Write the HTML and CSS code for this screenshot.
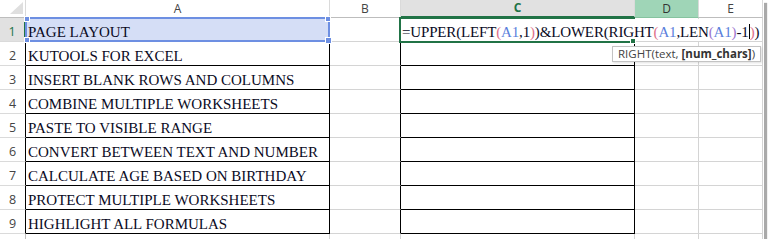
FILE: index.html
```html
<!DOCTYPE html>
<html>
<head>
<meta charset="utf-8">
<link rel="stylesheet" href="styles.css">
</head>
<body>
<div class="sheet">
  <div class="c ch corner"><svg width="25" height="17" viewBox="0 0 25 17"><polygon points="23,2 23,14 10,14" fill="#dfdfdf"/></svg></div>
  <div class="c ch">A</div>
  <div class="c ch">B</div>
  <div class="c ch chsel">C</div>
  <div class="c ch chhi">D</div>
  <div class="c ch">E</div>
  <div class="pad"></div>

  <div class="c rh rhsel">1</div>
  <div class="c bx ref"><span class="refbox"><i class="h tl"></i><i class="h tr"></i><i class="h bl2"></i><i class="h br"></i></span><span class="txt">PAGE LAYOUT</span></div>
  <div class="c bl"></div>
  <div class="c bx act">
    <span class="edit">=UPPER(LEFT<span class="p1">(</span><span class="r">A1</span>,1<span class="p1">)</span>)&amp;LOWER(RIGHT<span class="p1">(</span><span class="r">A1</span>,LEN<span class="p2">(</span><span class="r">A1</span><span class="p2">)</span>-1<span class="caret"></span><span class="p1">)</span>)</span>
    <span class="frame"></span>
    <span class="fill"></span>
  </div>
  <div class="c"></div>
  <div class="c"></div>
  <div class="pad"></div>

  <div class="c rh bl">2</div><div class="c bx">KUTOOLS FOR EXCEL</div><div class="c bl"></div><div class="c bx"></div><div class="c"></div><div class="c"></div><div class="pad"></div>
  <div class="c rh bl">3</div><div class="c bx">INSERT BLANK ROWS AND COLUMNS</div><div class="c bl"></div><div class="c bx"></div><div class="c"></div><div class="c"></div><div class="pad"></div>
  <div class="c rh bl">4</div><div class="c bx">COMBINE MULTIPLE WORKSHEETS</div><div class="c bl"></div><div class="c bx"></div><div class="c"></div><div class="c"></div><div class="pad"></div>
  <div class="c rh bl">5</div><div class="c bx">PASTE TO VISIBLE RANGE</div><div class="c bl"></div><div class="c bx"></div><div class="c"></div><div class="c"></div><div class="pad"></div>
  <div class="c rh bl">6</div><div class="c bx">CONVERT BETWEEN TEXT AND NUMBER</div><div class="c bl"></div><div class="c bx"></div><div class="c"></div><div class="c"></div><div class="pad"></div>
  <div class="c rh bl">7</div><div class="c bx">CALCULATE AGE BASED ON BIRTHDAY</div><div class="c bl"></div><div class="c bx"></div><div class="c"></div><div class="c"></div><div class="pad"></div>
  <div class="c rh bl">8</div><div class="c bx">PROTECT MULTIPLE WORKSHEETS</div><div class="c bl"></div><div class="c bx"></div><div class="c"></div><div class="c"></div><div class="pad"></div>
  <div class="c rh bl">9</div><div class="c bx">HIGHLIGHT ALL FORMULAS</div><div class="c bl"></div><div class="c bx"></div><div class="c"></div><div class="c"></div><div class="pad"></div>
  <div class="c rh"></div><div class="c"></div><div class="c"></div><div class="c"></div><div class="c"></div><div class="c"></div><div class="pad"></div>

  <div class="tip">RIGHT(text, <b>[num_chars]</b>)</div>
</div>
</body>
</html>
```
FILE: styles.css
```css
html, body { margin: 0; padding: 0; background: #fff; }
.sheet {
  position: relative;
  width: 764px;
  height: 239px;
  overflow: hidden;
  display: grid;
  grid-template-columns: 26px 304px 71px 234px 64px 64px 1px;
  grid-template-rows: 18px repeat(10, 24px);
  background: #fff;
  box-shadow: 3px 3px 1px #a9a9a9;
}
.c {
  box-sizing: border-box;
  border-right: 1px solid #d4d4d4;
  border-bottom: 1px solid #d4d4d4;
  display: flex;
  align-items: flex-end;
  padding: 0 0 0 2px;
  font: 15px/17px "Liberation Serif", "Times New Roman", serif;
  color: #0a0a1e;
  white-space: nowrap;
  position: relative;
}
.ch {
  align-items: center;
  justify-content: center;
  padding: 0;
  font: 12px/16px "Open Sans", "Noto Sans", sans-serif;
  color: #444;
  border-bottom-color: #bdbdbd;
  border-right-color: #dadada;
}
.corner { align-items: stretch; justify-content: flex-start; }
.corner svg { display: block; }
.chsel {
  background: #e1e1e1;
  color: #217346;
  font-weight: bold;
  border-bottom: 2px solid #217346;
}
.chhi {
  background: #9fd5b7;
  color: #333;
  border-bottom-color: #86c39f;
}
.rh {
  justify-content: center;
  padding: 0 0 1px 0;
  font: 12.5px/17px "Open Sans", "Noto Sans", sans-serif;
  color: #444;
  border-right-color: #bdbdbd;
  border-bottom-color: #dadada;
}
.rhsel {
  background: #e1e1e1;
  color: #217346;
  border-right: 2px solid #217346;
}
.rh.bl { border-right-color: #000; }
.bx { border-right-color: #000; border-bottom-color: #000; }
.bl { border-right-color: #000; }
.pad { background: #fff; }

.ref { background: #d5def6; }
.txt { position: relative; z-index: 1; }
.refbox {
  position: absolute;
  left: -1px;
  top: -1px;
  width: 305px;
  height: 25px;
  box-sizing: border-box;
  border: 2px solid #6d8fe2;
  z-index: 2;
}
.h {
  position: absolute;
  width: 4px;
  height: 4px;
  background: #6d8fe2;
  border: 1px solid #fff;
}
.tl { left: -3px; top: -3px; }
.tr { right: -3px; top: -3px; }
.bl2 { left: -3px; bottom: -3px; }
.br { right: -4px; bottom: -4px; width: 5px; height: 5px; }

.edit {
  position: absolute;
  left: 0;
  top: 1px;
  width: 361px;
  height: 22px;
  background: #fff;
  padding-left: 1px;
  box-sizing: border-box;
  display: flex;
  align-items: flex-end;
  letter-spacing: -0.16px;
  z-index: 3;
}
.p1 { color: #e0708a; }
.p2 { color: #a077cf; }
.r { color: #5b7fdc; }
.caret {
  display: inline-block;
  width: 1px;
  height: 15px;
  background: #000;
  margin: 0 0 2px 0;
}
.frame {
  position: absolute;
  left: -2px;
  top: -1px;
  width: 236px;
  height: 26px;
  box-sizing: border-box;
  border: 2px solid #217346;
  border-right: none;
  z-index: 4;
}
.fill {
  position: absolute;
  right: -2px;
  bottom: -3px;
  width: 4px;
  height: 4px;
  background: #217346;
  border: 1px solid #fff;
  z-index: 5;
}
.tip {
  position: absolute;
  left: 612px;
  top: 46px;
  height: 16px;
  box-sizing: border-box;
  padding: 0 5px;
  border: 1px solid #c3c3c3;
  background: #fff;
  box-shadow: 1px 1px 2px rgba(0,0,0,0.12);
  font: 11.5px/14px "Open Sans", "Noto Sans", sans-serif;
  color: #444;
  white-space: nowrap;
  z-index: 6;
}
.tip b { color: #333; }
```
